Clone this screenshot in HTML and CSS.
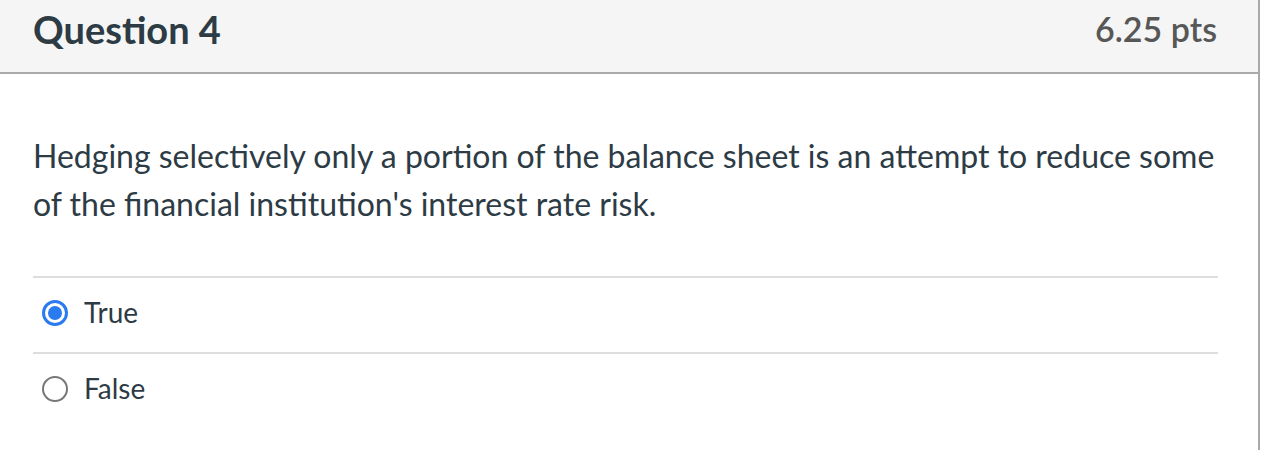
FILE: index.html
```html
<!DOCTYPE html>
<html>
<head>
<meta charset="utf-8">
<link rel="stylesheet" href="styles.css">
</head>
<body>
<div class="question">
  <div class="q-header">
    <h2 class="q-title">Question 4</h2>
    <div class="q-points">6.25 pts</div>
  </div>
  <div class="q-body">
    <p class="q-text">Hedging selectively only a portion of the balance sheet is an attempt to reduce some of the financial institution's interest rate risk.</p>
    <div class="answers">
      <label class="answer">
        <span class="radio checked"><span class="dot"></span></span>
        <span class="answer-label">True</span>
      </label>
      <label class="answer">
        <span class="radio"></span>
        <span class="answer-label">False</span>
      </label>
    </div>
  </div>
</div>
</body>
</html>
```
FILE: styles.css
```css
* { box-sizing: border-box; }
html, body { margin: 0; padding: 0; background: #fff; }
body { font-family: Lato, "Open Sans", sans-serif; color: #2d3b45; }
.question {
  width: 1260px;
  height: 450px;
  border-right: 2px solid #a9a9a9;
}
.q-header {
  height: 74px;
  background: #f5f5f5;
  border-bottom: 2px solid #aaaaaa;
  display: flex;
  align-items: center;
  justify-content: space-between;
  padding: 0 41px 0 33px;
}
.q-title {
  margin: 0;
  font-size: 38px;
  font-weight: 700;
  color: #2d3b45;
  line-height: 1;
  margin-top: -14px;
}
.q-points {
  font-size: 34px;
  font-weight: 600;
  color: #575757;
  line-height: 1;
  margin-top: -14px;
}
.q-body {
  padding: 58px 40px 0 33px;
}
.q-text {
  margin: 0 0 48px 0;
  font-size: 32px;
  line-height: 48px;
}
.answer {
  display: flex;
  align-items: center;
  height: 76px;
  border-top: 2px solid #dddddd;
  padding-left: 9px;
  padding-bottom: 4px;
  font-size: 28px;
}
.answer-label { margin-left: 16px; line-height: 1.2; }
.radio {
  width: 26px;
  height: 26px;
  border-radius: 50%;
  border: 2px solid #777;
  display: flex;
  align-items: center;
  justify-content: center;
  background: #fff;
}
.radio.checked { border: 3px solid #2b7bf0; }
.dot {
  width: 14px;
  height: 14px;
  border-radius: 50%;
  background: #2b7bf0;
}
```
